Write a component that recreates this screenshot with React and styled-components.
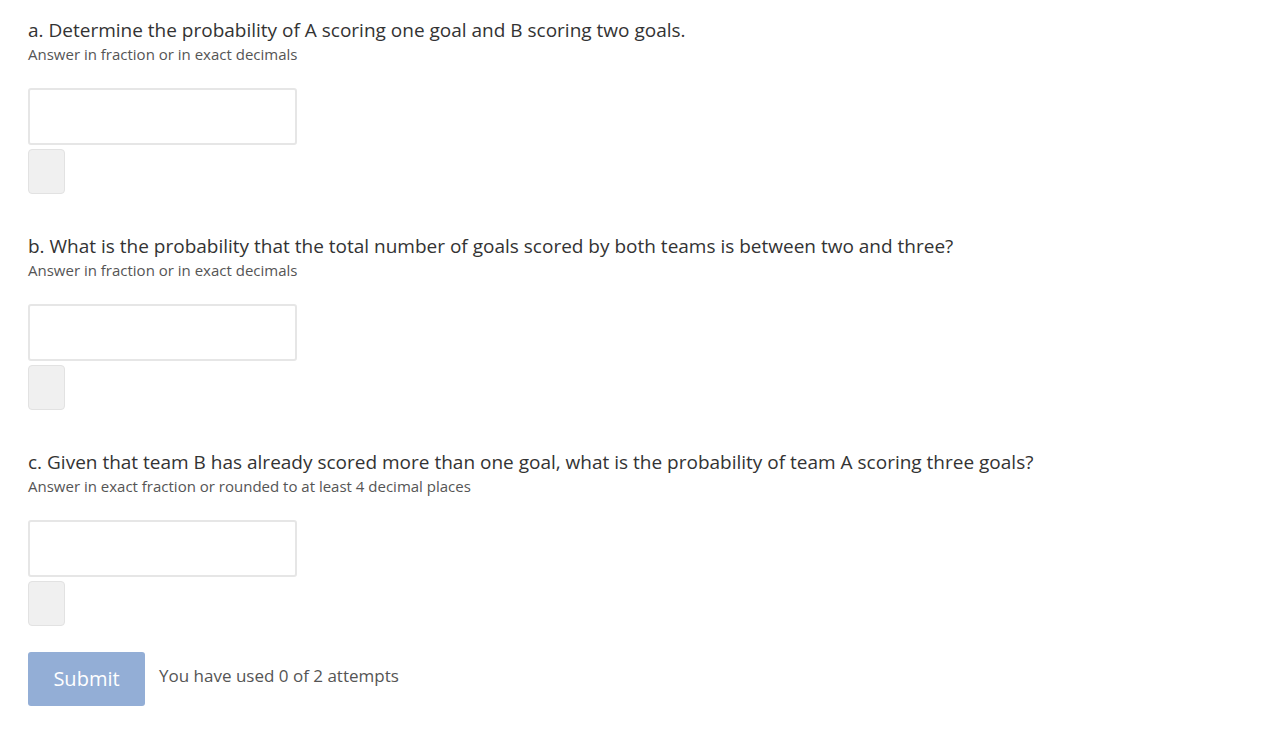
import React from "react";
import styled, { createGlobalStyle } from "styled-components";

const Global = createGlobalStyle`
  html, body { margin: 0; padding: 0; background: #fff; }
  body { font-family: "Open Sans", "Noto Sans", Arial, sans-serif; }
`;

const Page = styled.div`
  padding: 17px 28px 0;
  display: flex;
  flex-direction: column;
`;

const Part = styled.section`
  display: flex;
  flex-direction: column;
  height: 216px;
`;

const Question = styled.div`
  font-size: 19px;
  line-height: 26px;
  color: #333;
  white-space: nowrap;
`;

const Hint = styled.div`
  font-size: 15px;
  line-height: 20px;
  color: #555;
  margin-top: 1px;
  white-space: nowrap;
`;

const Input = styled.input`
  box-sizing: border-box;
  width: 269px;
  height: 57px;
  margin-top: 24px;
  border: 2px solid #e6e6e6;
  border-radius: 3px;
  background: #fff;
  outline: none;
`;

const Status = styled.div`
  box-sizing: border-box;
  width: 37px;
  height: 45px;
  margin-top: 4px;
  background: #f0f0f0;
  border: 1px solid #e2e2e2;
  border-radius: 4px;
`;

const Actions = styled.div`
  display: flex;
  align-items: center;
  gap: 14px;
  margin-top: -13px;
`;

const Submit = styled.button`
  box-sizing: border-box;
  width: 117px;
  height: 54px;
  border: none;
  border-radius: 3px;
  background: #93aed6;
  color: #fff;
  font-family: inherit;
  font-size: 20px;
  padding: 0 0 2px;
`;

const Attempts = styled.span`
  font-size: 17px;
  line-height: 24px;
  color: #555;
  margin-bottom: 6px;
`;

const parts = [
  {
    q: "a. Determine the probability of A scoring one goal and B scoring two goals.",
    h: "Answer in fraction or in exact decimals",
  },
  {
    q: "b. What is the probability that the total number of goals scored by both teams is between two and three?",
    h: "Answer in fraction or in exact decimals",
  },
  {
    q: "c. Given that team B has already scored more than one goal, what is the probability of team A scoring three goals?",
    h: "Answer in exact fraction or rounded to at least 4 decimal places",
  },
];

export default function App() {
  return (
    <>
      <Global />
      <Page>
        {parts.map((p, i) => (
          <Part key={i}>
            <Question>{p.q}</Question>
            <Hint>{p.h}</Hint>
            <Input type="text" />
            <Status />
          </Part>
        ))}
        <Actions>
          <Submit>Submit</Submit>
          <Attempts>You have used 0 of 2 attempts</Attempts>
        </Actions>
      </Page>
    </>
  );
}
